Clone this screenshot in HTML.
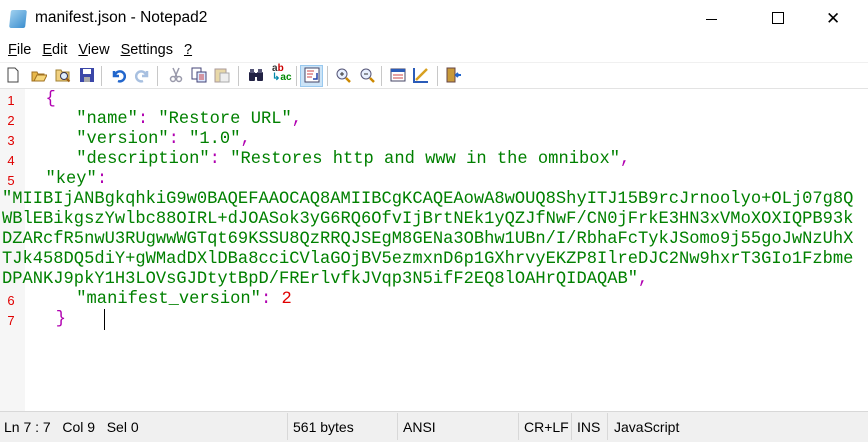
<!DOCTYPE html>
<html><head><meta charset="utf-8"><style>
*{margin:0;padding:0;box-sizing:border-box}
body{width:868px;height:442px;overflow:hidden;background:#fff;font-family:"Liberation Sans",sans-serif;position:relative}
.abs{position:absolute}
.code{font-family:"Liberation Mono",monospace;font-size:17.1px;line-height:20px;white-space:pre;position:absolute}
.s{color:#008000}.p{color:#b000b0}.n{color:#e00000}
.ln{position:absolute;left:0;width:22px;text-align:center;color:#e00000;font-family:"Liberation Sans",sans-serif;font-size:13px;line-height:20px}
.ic{position:absolute;top:67px;width:16px;height:16px}
.sep{position:absolute;top:66px;width:1px;height:20px;background:#c8c8c8}
</style></head><body>
<div class="abs" style="left:10px;top:10px;width:16px;height:18px;background:linear-gradient(135deg,#9fd0ef,#3c8fcf);border-radius:2px;transform:skewX(-6deg)"></div>
<div class="abs" style="left:35px;top:9px;font-size:15.5px;color:#000">manifest.json - Notepad2</div>
<div class="abs" style="left:706px;top:19px;width:11px;height:1px;background:#000"></div>
<div class="abs" style="left:772px;top:12px;width:12px;height:12px;border:1px solid #000"></div>
<div class="abs" style="left:826px;top:9px;font-size:17px;color:#000;font-weight:300">✕</div>
<div class="abs" style="left:8px;top:42px;font-size:14.5px;color:#000;word-spacing:0">
<span style="margin-right:11px"><u>F</u>ile</span><span style="margin-right:11px"><u>E</u>dit</span><span style="margin-right:11px"><u>V</u>iew</span><span style="margin-right:11px"><u>S</u>ettings</span><span><u>?</u></span></div>
<div class="abs" style="left:0;top:62px;width:868px;height:1px;background:#f0f0f0"></div>
<svg class="ic" style="left:5px" viewBox="0 0 16 16"><path d="M3 1h7l3 3v11H3z" fill="#fff" stroke="#444"/></svg>
<svg class="ic" style="left:31px" viewBox="0 0 16 16"><path d="M1 5h5l1 2h6v7H1z" fill="#e8b84a" stroke="#a07020"/><path d="M3 14l3-6h10l-3 6z" fill="#f6d67a" stroke="#a07020"/></svg>
<svg class="ic" style="left:55px" viewBox="0 0 16 16"><path d="M1 3h5l1 2h7v9H1z" fill="#f0d080" stroke="#a08030"/><circle cx="9" cy="9" r="3.5" fill="#dfefff" stroke="#335"/><path d="M11.5 11.5l3 3" stroke="#a06010" stroke-width="2"/></svg>
<svg class="ic" style="left:79px" viewBox="0 0 16 16"><rect x="1" y="1" width="14" height="14" fill="#3b47a8"/><rect x="4" y="2" width="8" height="5" fill="#fff"/><rect x="5" y="10" width="6" height="5" fill="#aaa"/></svg>
<div class="sep" style="left:101px"></div>
<svg class="ic" style="left:110px" viewBox="0 0 16 16"><path d="M4 4v5h5" fill="none" stroke="#2266cc" stroke-width="2.5"/><path d="M5 8a5 5 0 1 1 3 6" fill="none" stroke="#2266cc" stroke-width="2.5"/></svg>
<svg class="ic" style="left:135px" viewBox="0 0 16 16"><path d="M12 4v5H7" fill="none" stroke="#a8c0e0" stroke-width="2.5"/><path d="M11 8a5 5 0 1 0-3 6" fill="none" stroke="#a8c0e0" stroke-width="2.5"/></svg>
<div class="sep" style="left:157px"></div>
<svg class="ic" style="left:168px" viewBox="0 0 16 16"><path d="M5 1l4 9M11 1l-4 9" stroke="#99a" stroke-width="1.5"/><circle cx="5" cy="12" r="2.5" fill="none" stroke="#99a" stroke-width="1.5"/><circle cx="11" cy="12" r="2.5" fill="none" stroke="#99a" stroke-width="1.5"/></svg>
<svg class="ic" style="left:191px" viewBox="0 0 16 16"><rect x="1" y="1" width="9" height="11" fill="#fff" stroke="#447"/><rect x="6" y="5" width="9" height="10" fill="#dde8ff" stroke="#447"/><path d="M8 8h5M8 10h5M8 12h5" stroke="#c44"/></svg>
<svg class="ic" style="left:214px" viewBox="0 0 16 16"><rect x="1" y="2" width="11" height="13" fill="#e8d8a8" stroke="#a99"/><rect x="6" y="6" width="9" height="9" fill="#eee" stroke="#aaa"/></svg>
<div class="sep" style="left:238px"></div>
<svg class="ic" style="left:248px" viewBox="0 0 16 16"><rect x="1" y="5" width="6" height="9" rx="1" fill="#224"/><rect x="9" y="5" width="6" height="9" rx="1" fill="#224"/><rect x="6" y="6" width="4" height="4" fill="#224"/><rect x="2" y="2" width="4" height="4" fill="#557"/><rect x="10" y="2" width="4" height="4" fill="#557"/></svg>
<div class="abs" style="left:272px;top:64px;font-size:10px;line-height:9px;font-weight:bold;font-family:'Liberation Sans'"><span style="color:#333">a</span><span style="color:#c00">b</span><br><span style="color:#08a">↳</span><span style="color:#080">ac</span></div>
<div class="sep" style="left:296px"></div>
<div class="abs" style="left:300px;top:65px;width:23px;height:22px;background:#cce4f7;border:1px solid #99c9ef"></div>
<svg class="ic" style="left:304px" viewBox="0 0 16 16"><rect x="1" y="1" width="14" height="14" fill="#fff" stroke="#446"/><path d="M3 4h7M3 7h6M3 10h5" stroke="#c44"/><path d="M13 6v6H9" fill="none" stroke="#24a" stroke-width="1.5"/></svg>
<div class="sep" style="left:327px"></div>
<svg class="ic" style="left:335px" viewBox="0 0 16 16"><circle cx="7" cy="7" r="5" fill="#e8f0ff" stroke="#557"/><path d="M5 7h4M7 5v4" stroke="#333"/><path d="M11 11l4 4" stroke="#c80" stroke-width="2.5"/></svg>
<svg class="ic" style="left:359px" viewBox="0 0 16 16"><circle cx="7" cy="7" r="5" fill="#e8f0ff" stroke="#557"/><path d="M5 7h4" stroke="#333"/><path d="M11 11l4 4" stroke="#c80" stroke-width="2.5"/></svg>
<div class="sep" style="left:381px"></div>
<svg class="ic" style="left:390px" viewBox="0 0 16 16"><rect x="1" y="2" width="14" height="12" fill="#fff" stroke="#446"/><rect x="1" y="2" width="14" height="3" fill="#2a5bb8"/><path d="M3 8h10M3 11h10" stroke="#c44"/></svg>
<svg class="ic" style="left:413px" viewBox="0 0 16 16"><path d="M1 1v14h14" fill="none" stroke="#2a5bb8" stroke-width="2"/><path d="M3 13L14 2" stroke="#d8a020" stroke-width="2.5"/></svg>
<div class="sep" style="left:437px"></div>
<svg class="ic" style="left:446px" viewBox="0 0 16 16"><rect x="1" y="1" width="8" height="14" fill="#c89a3a" stroke="#644"/><path d="M15 8h-5M12 6l-2 2 2 2" fill="none" stroke="#2266cc" stroke-width="2"/></svg>
<div class="abs" style="left:0;top:88px;width:868px;height:1px;background:#e3e3e3"></div>
<div class="abs" style="left:0;top:89px;width:25px;height:322px;background:#f6f6f6"></div>
<div class="ln" style="top:91px">1</div>
<div class="ln" style="top:111px">2</div>
<div class="ln" style="top:131px">3</div>
<div class="ln" style="top:151px">4</div>
<div class="ln" style="top:171px">5</div>
<div class="ln" style="top:291px">6</div>
<div class="ln" style="top:311px">7</div>
<div class="code" style="left:25px;top:90px"><span class="p">  {</span>
<span class="s">     "name"</span><span class="p">:</span> <span class="s">"Restore URL"</span><span class="p">,</span>
<span class="s">     "version"</span><span class="p">:</span> <span class="s">"1.0"</span><span class="p">,</span>
<span class="s">     "description"</span><span class="p">:</span> <span class="s">"Restores http and www in the omnibox"</span><span class="p">,</span>
<span class="s">  "key"</span><span class="p">:</span></div>
<div class="code s" style="left:2px;top:190px">"MIIBIjANBgkqhkiG9w0BAQEFAAOCAQ8AMIIBCgKCAQEAowA8wOUQ8ShyITJ15B9rcJrnoolyo+OLj07g8Q
WBlEBikgszYwlbc88OIRL+dJOASok3yG6RQ6OfvIjBrtNEk1yQZJfNwF/CN0jFrkE3HN3xVMoXOXIQPB93k
DZARcfR5nwU3RUgwwWGTqt69KSSU8QzRRQJSEgM8GENa3OBhw1UBn/I/RbhaFcTykJSomo9j55goJwNzUhX
TJk458DQ5diY+gWMadDXlDBa8cciCVlaGOjBV5ezmxnD6p1GXhrvyEKZP8IlreDJC2Nw9hxrT3GIo1Fzbme
DPANKJ9pkY1H3LOVsGJDtytBpD/FRErlvfkJVqp3N5ifF2EQ8lOAHrQIDAQAB"<span class="p">,</span></div>
<div class="code" style="left:25px;top:290px"><span class="s">     "manifest_version"</span><span class="p">:</span> <span class="n">2</span>
<span class="p">   }</span></div>
<div class="abs" style="left:104px;top:309px;width:1px;height:21px;background:#000"></div>
<div class="abs" style="left:0;top:411px;width:868px;height:31px;background:#f0f0f0;border-top:1px solid #d8d8d8"></div>
<div class="abs" style="top:419px;left:0;width:868px;font-size:14px;color:#000">
<span class="abs" style="left:4px;white-space:nowrap">Ln 7 : 7 &nbsp; Col 9 &nbsp; Sel 0</span>
<span class="abs" style="left:293px">561 bytes</span>
<span class="abs" style="left:403px">ANSI</span>
<span class="abs" style="left:524px">CR+LF</span>
<span class="abs" style="left:577px">INS</span>
<span class="abs" style="left:614px">JavaScript</span>
</div>
<div class="abs" style="left:287px;top:413px;width:1px;height:27px;background:#d8d8d8"></div>
<div class="abs" style="left:397px;top:413px;width:1px;height:27px;background:#d8d8d8"></div>
<div class="abs" style="left:518px;top:413px;width:1px;height:27px;background:#d8d8d8"></div>
<div class="abs" style="left:571px;top:413px;width:1px;height:27px;background:#d8d8d8"></div>
<div class="abs" style="left:607px;top:413px;width:1px;height:27px;background:#d8d8d8"></div>
</body></html>
